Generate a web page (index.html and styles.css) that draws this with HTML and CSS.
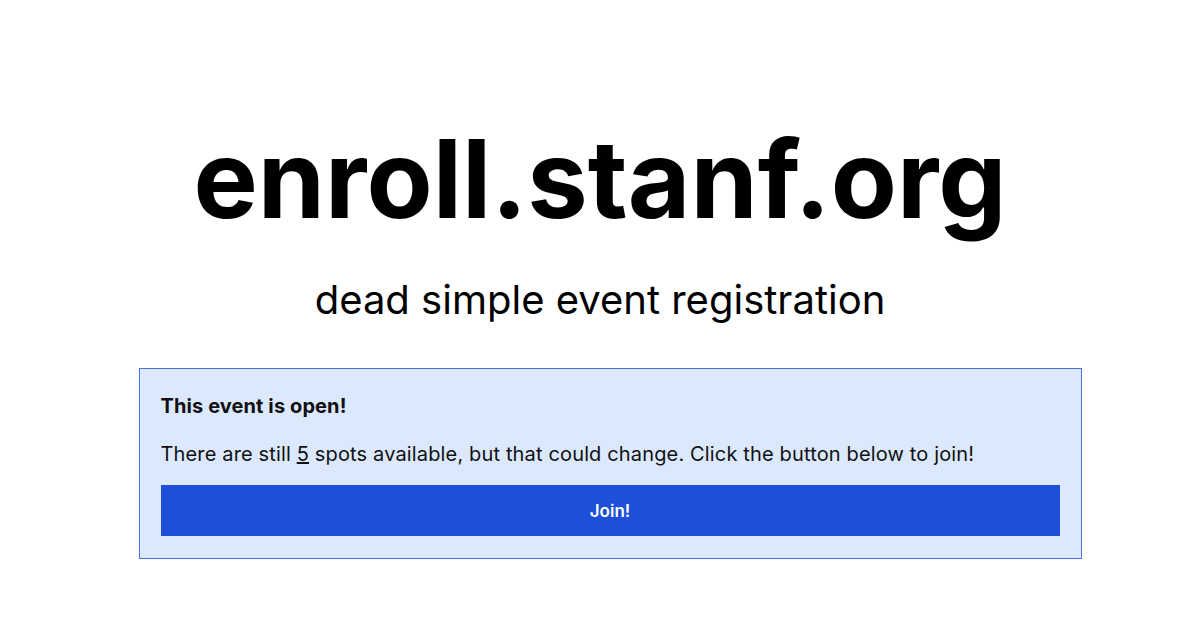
FILE: index.html
```html
<!DOCTYPE html>
<html>
<head>
<meta charset="utf-8">
<link rel="stylesheet" href="styles.css">
</head>
<body>
<main class="page">
  <h1 class="title">enroll.stanf.org</h1>
  <p class="tagline">dead simple event registration</p>
  <section class="card">
    <h2 class="card-title">This event is open!</h2>
    <p class="card-text">There are still <u>5</u> spots available, but that could change. Click the button below to join!</p>
    <button class="join">Join!</button>
  </section>
</main>
</body>
</html>
```
FILE: styles.css
```css
html, body {
  margin: 0;
  padding: 0;
  background: #fff;
}
body {
  font-family: Inter, "Noto Sans", sans-serif;
  color: #000;
}
.page {
  display: flex;
  flex-direction: column;
  align-items: center;
  padding-top: 125px;
}
.title {
  margin: 0;
  font-size: 108px;
  line-height: 108px;
  font-weight: 700;
}
.tagline {
  margin: 47px 0 0;
  font-size: 40px;
  line-height: 40px;
  font-weight: 400;
}
.card {
  margin: 48px 0 0 20px;
  width: 899px;
  padding: 21px 21px 22px;
  background: #dbe8fd;
  border: 1px solid #4a72dc;
  color: #111;
}
.card-title {
  margin: 0;
  padding-top: 4px;
  font-size: 20px;
  line-height: 24px;
  font-weight: 700;
  letter-spacing: 0.1px;
}
.card-text {
  margin: 24px 0 0;
  font-size: 20px;
  line-height: 24px;
  letter-spacing: 0.15px;
}
.join {
  display: block;
  margin-top: 19px;
  width: 100%;
  height: 51px;
  border: none;
  background: #1e4fd8;
  color: #fff;
  font-family: Inter, sans-serif;
  font-size: 17px;
  font-weight: 600;
}
```
